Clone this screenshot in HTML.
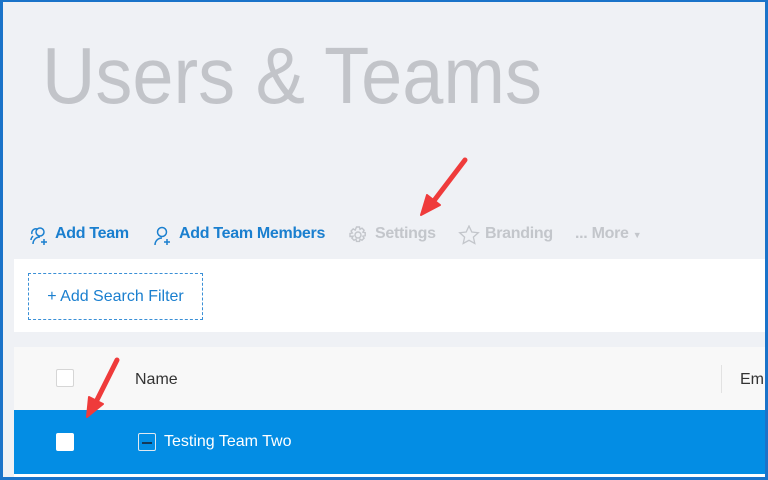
<!DOCTYPE html>
<html><head><meta charset="utf-8"><style>
html,body{margin:0;padding:0}
body{width:768px;height:480px;overflow:hidden;background:#1a73c9;position:relative;font-family:"Liberation Sans",sans-serif}
.in{position:absolute;left:3px;top:2px;width:762px;height:475px;background:#eff1f5;overflow:hidden}
.title{position:absolute;left:0;top:0}
.tb{position:absolute;top:223px;font-size:16px;font-weight:bold;letter-spacing:-0.3px}
.blue{color:#1a7fcf}.gray{color:#c3c6cb}
.panel{position:absolute;left:11px;top:257px;width:751px;height:73px;background:#fff}
.filter{position:absolute;left:14px;top:14px;width:175px;height:47px;border:1px dashed #3a8fd6;box-sizing:border-box;color:#1a7fcf;font-size:16px;line-height:45px;text-align:center}
.hdr{position:absolute;left:11px;top:345px;width:751px;height:63px;background:#f8f8f8}
.row{position:absolute;left:11px;top:408px;width:751px;height:64px;background:#038de4}
.cb{position:absolute;width:18px;height:18px;border-radius:2px;box-sizing:border-box}
</style></head><body><div class="in">
<svg class="title" width="760" height="120"><text x="39" y="101" font-family="Liberation Sans" font-size="80" fill="#c2c4c9" textLength="500" lengthAdjust="spacingAndGlyphs">Users &amp; Teams</text></svg>
<svg style="position:absolute;left:26px;top:223px" width="22" height="22" viewBox="0 0 22 22" fill="none" stroke="#1a7fcf" stroke-width="1.5"><circle cx="11" cy="7" r="4"/><path d="M4 19c0-4 3-7 7-7"/><path d="M8 4a4 4 0 0 0-5 5M2 15c0-2 1-3 2-4"/><path d="M15 14v6M12 17h6"/></svg>
<div class="tb blue" style="left:52px">Add Team</div>
<svg style="position:absolute;left:149px;top:223px" width="22" height="22" viewBox="0 0 22 22" fill="none" stroke="#1a7fcf" stroke-width="1.5"><circle cx="10" cy="7" r="4.5"/><path d="M3 20c0-4 3-7 7-7"/><path d="M15 14v6M12 17h6"/></svg>
<div class="tb blue" style="left:176px">Add Team Members</div>
<svg style="position:absolute;left:345px;top:223px" width="20" height="20" viewBox="0 0 20 20" fill="none" stroke="#c3c6cb" stroke-width="1.4"><circle cx="10" cy="10" r="3"/><path d="M8.5 2h3l.5 2.3 2-1.2 2.1 2.1-1.2 2 2.3.5v3l-2.3.5 1.2 2-2.1 2.1-2-1.2-.5 2.3h-3l-.5-2.3-2 1.2-2.1-2.1 1.2-2L2 11.5v-3l2.3-.5-1.2-2 2.1-2.1 2 1.2z"/></svg>
<div class="tb gray" style="left:372px">Settings</div>
<svg style="position:absolute;left:455px;top:223px" width="22" height="20" viewBox="0 0 22 20" fill="none" stroke="#c3c6cb" stroke-width="1.3"><path d="M11 1l2.8 6 6.5.7-4.9 4.4 1.4 6.4L11 15.3 5.2 18.5l1.4-6.4L1.7 7.7 8.2 7z"/></svg>
<div class="tb gray" style="left:482px">Branding</div>
<div class="tb gray" style="left:572px">... More <span style="font-size:9px">▼</span></div>
<div class="panel"><div class="filter">+ Add Search Filter</div></div>
<div class="hdr">
<div class="cb" style="left:42px;top:22px;border:1px solid #d6d6d6;background:#fff"></div>
<div style="position:absolute;left:121px;top:24px;font-size:16px;color:#333">Name</div>
<div style="position:absolute;left:707px;top:18px;width:1px;height:28px;background:#e2e2e2"></div>
<div style="position:absolute;left:726px;top:24px;font-size:16px;color:#333">Em</div>
</div>
<div class="row">
<div class="cb" style="left:42px;top:23px;background:#fff"></div>
<div class="cb" style="left:124px;top:23px;border:1px solid #dfe8f0;background:#038de4"><div style="position:absolute;left:3px;top:8px;width:10px;height:2px;background:#153a5a"></div></div>
<div style="position:absolute;left:150px;top:23px;font-size:16px;color:#fff">Testing Team Two</div>
</div>
<div style="position:absolute;left:11px;top:472px;width:751px;height:3px;background:#fff"></div>
<svg style="position:absolute;left:0;top:0" width="762" height="475"><g fill="#ef3b3b" stroke="#ef3b3b" stroke-linecap="round"><path d="M462 158 L430 200" stroke-width="5"/><path d="M418 213 L424 193 L437 203 Z" stroke-width="2" stroke-linejoin="round"/><path d="M114 358 L92 402" stroke-width="5"/><path d="M84 415 L86 395 L100 402 Z" stroke-width="2" stroke-linejoin="round"/></g></svg>
</div></body></html>
